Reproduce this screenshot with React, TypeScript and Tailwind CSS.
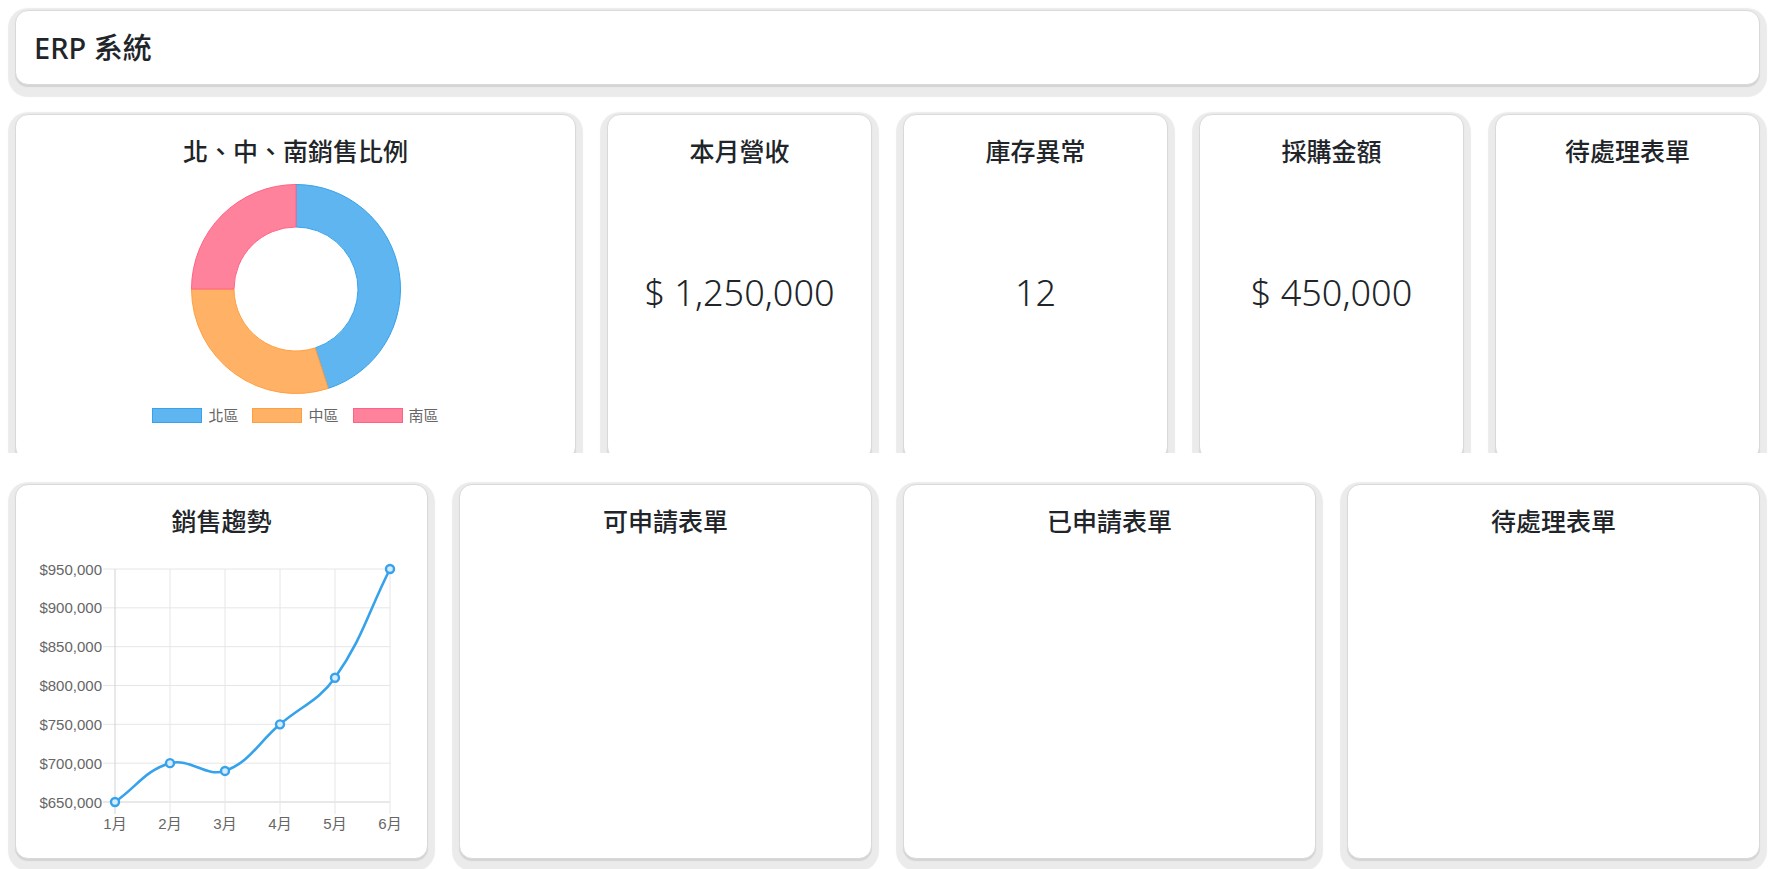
import React from "react";

const card =
  "rounded-[13px] border border-[#d9d9d9] bg-white shadow-[0_2px_1px_#d4d4d4,0_5px_1px_7px_#ebebeb]";
const title =
  "pt-[21px] text-center text-[25px] leading-[30px] font-medium text-[#212529]";

const donutData = [
  { label: "北區", value: 45, fill: "#5eb5ef", stroke: "#36a2eb" },
  { label: "中區", value: 30, fill: "#ffb266", stroke: "#ff9f40" },
  { label: "南區", value: 25, fill: "#ff829d", stroke: "#ff6384" },
];

const sales = [650000, 700000, 690000, 750000, 810000, 950000];
const months = ["1月", "2月", "3月", "4月", "5月", "6月"];
const ticks = [950000, 900000, 850000, 800000, 750000, 700000, 650000];

function arcPath(cx: number, cy: number, R: number, r: number, a0: number, a1: number) {
  const pt = (rad: number, a: number) => {
    const t = (a * Math.PI) / 180;
    return `${cx + rad * Math.sin(t)} ${cy - rad * Math.cos(t)}`;
  };
  const large = a1 - a0 > 180 ? 1 : 0;
  return `M ${pt(R, a0)} A ${R} ${R} 0 ${large} 1 ${pt(R, a1)} L ${pt(r, a1)} A ${r} ${r} 0 ${large} 0 ${pt(r, a0)} Z`;
}

const Donut = () => {
  let start = 0;
  const total = donutData.reduce((s, d) => s + d.value, 0);
  return (
    <svg width="220" height="220" viewBox="0 0 220 220" className="mx-auto mt-[13px] block">
      {donutData.map((d) => {
        const end = start + (d.value / total) * 360;
        const p = arcPath(110, 110, 104.5, 62, start, end);
        start = end;
        return <path key={d.label} d={p} fill={d.fill} stroke={d.stroke} strokeWidth={1} />;
      })}
    </svg>
  );
};

// Chart.js style spline (tension 0.4)
function splinePath(pts: [number, number][]) {
  const t = 0.4;
  const cps = pts.map((cur, i) => {
    const prev = pts[i - 1] || cur;
    const next = pts[i + 1] || cur;
    const d01 = Math.hypot(cur[0] - prev[0], cur[1] - prev[1]);
    const d12 = Math.hypot(next[0] - cur[0], next[1] - cur[1]);
    const sum = d01 + d12 || 1;
    const fa = (t * d01) / sum;
    const fb = (t * d12) / sum;
    return {
      prev: [cur[0] - fa * (next[0] - prev[0]), cur[1] - fa * (next[1] - prev[1])],
      next: [cur[0] + fb * (next[0] - prev[0]), cur[1] + fb * (next[1] - prev[1])],
    };
  });
  let d = `M ${pts[0][0]} ${pts[0][1]}`;
  for (let i = 1; i < pts.length; i++) {
    const a = cps[i - 1].next;
    const b = cps[i].prev;
    d += ` C ${a[0]} ${a[1]} ${b[0]} ${b[1]} ${pts[i][0]} ${pts[i][1]}`;
  }
  return d;
}

const LineChart = () => {
  const left = 99;
  const step = 55;
  const top = 28;
  const h = 233;
  const y = (v: number) => top + ((950000 - v) / 300000) * h;
  const pts: [number, number][] = sales.map((v, i) => [left + i * step, y(v)]);
  const right = left + step * 5;
  const bottom = top + h;
  return (
    <svg width="412" height="300" viewBox="0 0 412 300" className="mt-[5px] block">
      {ticks.map((v) => (
        <line
          key={v}
          x1={left - 12}
          x2={right}
          y1={y(v)}
          y2={y(v)}
          stroke={v === 650000 ? "#d2d2d2" : "#e6e6e6"}
          strokeWidth={1}
        />
      ))}
      {months.map((m, i) => (
        <line
          key={m}
          x1={left + i * step}
          x2={left + i * step}
          y1={top}
          y2={bottom + 12}
          stroke={i === 0 ? "#d2d2d2" : "#e6e6e6"}
          strokeWidth={1}
        />
      ))}
      {ticks.map((v) => (
        <text
          key={"t" + v}
          x={86}
          y={y(v)}
          textAnchor="end"
          dominantBaseline="central"
          fontSize="15"
          fill="#666"
          fontFamily="'Liberation Sans', Arial, sans-serif"
        >
          ${v.toLocaleString("en-US")}
        </text>
      ))}
      {months.map((m, i) => (
        <text
          key={"m" + m}
          x={left + i * step}
          y={282}
          textAnchor="middle"
          dominantBaseline="central"
          fontSize="15"
          fill="#666"
          fontFamily="'Liberation Sans', 'Noto Sans CJK TC', sans-serif"
        >
          {m}
        </text>
      ))}
      <path d={splinePath(pts)} fill="none" stroke="#36a2eb" strokeWidth={2.6} />
      {pts.map((p, i) => (
        <circle key={i} cx={p[0]} cy={p[1]} r={4} fill="#d7ecfb" stroke="#36a2eb" strokeWidth={2.4} />
      ))}
    </svg>
  );
};

const StatCard = ({ name, value }: { name: string; value?: string }) => (
  <div className={`${card} h-[346px]`}>
    <h5 className={title}>{name}</h5>
    {value && (
      <p className="mt-[102px] text-center text-[36px] leading-[50px] font-light text-[#212529] [font-family:'Noto_Sans','Open_Sans',sans-serif]">
        {value}
      </p>
    )}
  </div>
);

export default function App() {
  return (
    <div className="min-h-screen bg-white pl-[15px] pr-[13px] pt-[10px] [font-family:'Noto_Sans','Noto_Sans_CJK_TC',sans-serif]">
      <div className={`${card} flex h-[75px] items-center px-[18px]`}>
        <h3 className="text-[29px] font-medium text-[#212529]">ERP 系統</h3>
      </div>

      <div className="mt-[29px] grid h-[339px] grid-cols-6 items-start gap-x-[31px] [clip-path:inset(-20px_-20px_0px_-20px)]">
        <div className={`${card} col-span-2 h-[346px]`}>
          <h5 className={title}>北、中、南銷售比例</h5>
          <Donut />
          <div className="mt-[7px] flex justify-center gap-[14px] text-[15px] leading-[18px] text-[#666]">
            {donutData.map((d) => (
              <div key={d.label} className="flex items-center gap-[6px]">
                <span
                  className="block h-[15px] w-[50px] border"
                  style={{ background: d.fill, borderColor: d.stroke }}
                />
                <span>{d.label}</span>
              </div>
            ))}
          </div>
        </div>
        <StatCard name="本月營收" value="$ 1,250,000" />
        <StatCard name="庫存異常" value="12" />
        <StatCard name="採購金額" value="$ 450,000" />
        <StatCard name="待處理表單" />
      </div>

      <div className="mt-[31px] grid grid-cols-4 gap-x-[31px]">
        <div className={`${card} h-[375px]`}>
          <h5 className={title}>銷售趨勢</h5>
          <LineChart />
        </div>
        <div className={`${card} h-[375px]`}>
          <h5 className={title}>可申請表單</h5>
        </div>
        <div className={`${card} h-[375px]`}>
          <h5 className={title}>已申請表單</h5>
        </div>
        <div className={`${card} h-[375px]`}>
          <h5 className={title}>待處理表單</h5>
        </div>
      </div>
    </div>
  );
}
